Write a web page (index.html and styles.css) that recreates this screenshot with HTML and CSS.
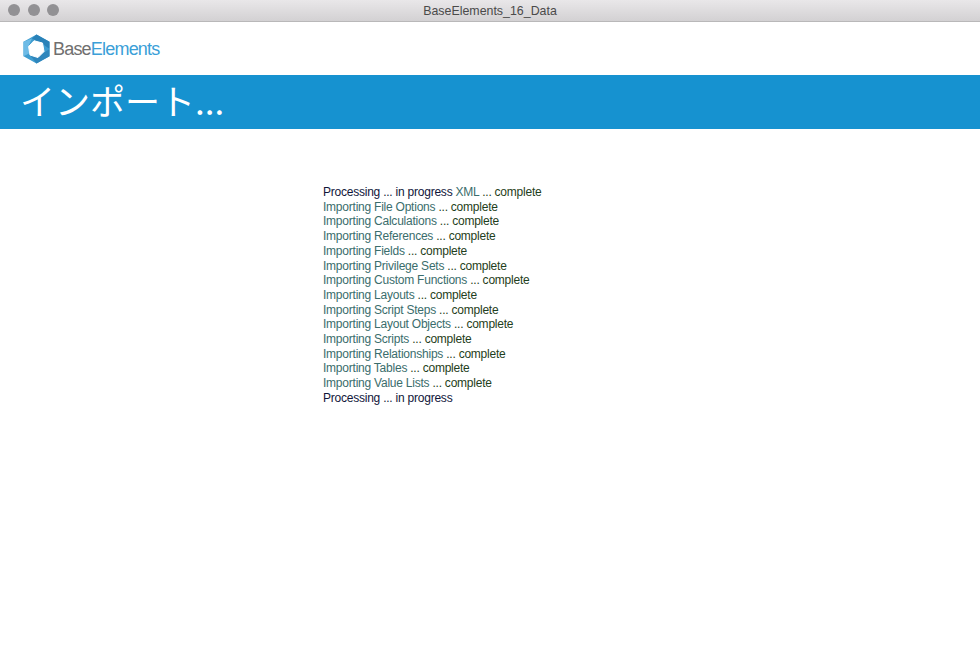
FILE: index.html
```html
<!DOCTYPE html>
<html lang="ja">
<head>
    <meta charset="UTF-8">
    <title>BaseElements_16_Data</title>
    <link rel="stylesheet" href="styles.css">
</head>
<body>
    <div class="titlebar">
        <div class="lights">
            <span class="light"></span>
            <span class="light"></span>
            <span class="light"></span>
        </div>
        <div class="window-title">BaseElements_16_Data</div>
    </div>

    <div class="logo-row">
        <svg class="logo-mark" width="27" height="30" viewBox="0 0 27 30">
            <polygon points="13.5,0.5 26.5,7.8 26.5,22.2 13.5,29.5 0.5,22.2 0.5,7.8" fill="#3f9dd0"/>
            <polygon points="13.5,0.5 26.5,7.8 26.5,15 20.5,10.5 9,4.6" fill="#2a82b8"/>
            <polygon points="0.5,22.2 0.5,7.8 9,4.6 6,11 6,19.5" fill="#6dbbe6"/>
            <polygon points="13.5,29.5 26.5,22.2 26.5,15 20.5,19 13,23.5 7,21" fill="#2f86bc"/>
            <polygon points="11,6.8 19.5,9 21,17.5 15,23.5 7,21 5.6,12.5" fill="#fff" stroke="#fff" stroke-width="1" stroke-linejoin="round"/>
        </svg>
        <span class="logo-text"><span class="logo-base">Base</span><span class="logo-elements">Elements</span></span>
    </div>

    <div class="banner">インポート...</div>

    <div class="log">
        <div class="log-line"><span class="dark">Processing ... in progress</span> <span class="teal">XML</span><span class="done"> ... complete</span></div>
        <div class="log-line"><span class="teal">Importing File Options</span><span class="done"> ... complete</span></div>
        <div class="log-line"><span class="teal">Importing Calculations</span><span class="done"> ... complete</span></div>
        <div class="log-line"><span class="teal">Importing References</span><span class="done"> ... complete</span></div>
        <div class="log-line"><span class="teal">Importing Fields</span><span class="done"> ... complete</span></div>
        <div class="log-line"><span class="teal">Importing Privilege Sets</span><span class="done"> ... complete</span></div>
        <div class="log-line"><span class="teal">Importing Custom Functions</span><span class="done"> ... complete</span></div>
        <div class="log-line"><span class="teal">Importing Layouts</span><span class="done"> ... complete</span></div>
        <div class="log-line"><span class="teal">Importing Script Steps</span><span class="done"> ... complete</span></div>
        <div class="log-line"><span class="teal">Importing Layout Objects</span><span class="done"> ... complete</span></div>
        <div class="log-line"><span class="teal">Importing Scripts</span><span class="done"> ... complete</span></div>
        <div class="log-line"><span class="teal">Importing Relationships</span><span class="done"> ... complete</span></div>
        <div class="log-line"><span class="teal">Importing Tables</span><span class="done"> ... complete</span></div>
        <div class="log-line"><span class="teal">Importing Value Lists</span><span class="done"> ... complete</span></div>
        <div class="log-line"><span class="dark">Processing ... in progress</span></div>
    </div>
</body>
</html>
```

FILE: styles.css
```css
html, body { margin: 0; padding: 0; height: 100%; background: #fff; overflow: hidden; }
body { font-family: "Liberation Sans", Arial, sans-serif; }

.titlebar { position: relative; display: flex; align-items: center; justify-content: center; height: 22px; box-sizing: border-box; background: linear-gradient(#e9e7e9, #d3d1d3); border-bottom: 1px solid #b9b8b9; }
.lights { position: absolute; left: 8px; top: 4px; display: flex; gap: 7.5px; }
.light { width: 12px; height: 12px; border-radius: 50%; background: #929194; }
.window-title { font-size: 12.4px; color: #4a4a4a; }

.logo-row { display: flex; align-items: center; height: 53px; padding-left: 23px; box-sizing: border-box; }
.logo-mark { margin-right: 3px; }
.logo-text { font-size: 18px; letter-spacing: -0.8px; padding-top: 2px; }
.logo-base { color: #6f6f6f; }
.logo-elements { color: #3b9fd8; }

.banner { height: 54px; padding-left: 20px; background: #1692d0; color: #fff; font-family: "Noto Sans CJK JP", "Liberation Sans", sans-serif; font-size: 35px; line-height: 49px; box-sizing: border-box; }

.log { margin: 56px 0 0 323px; font-size: 12px; line-height: 14.7px; letter-spacing: -0.23px; }
.dark { color: #10163a; }
.teal { color: #3a6d6c; }
.done { color: #1f4020; }
```
